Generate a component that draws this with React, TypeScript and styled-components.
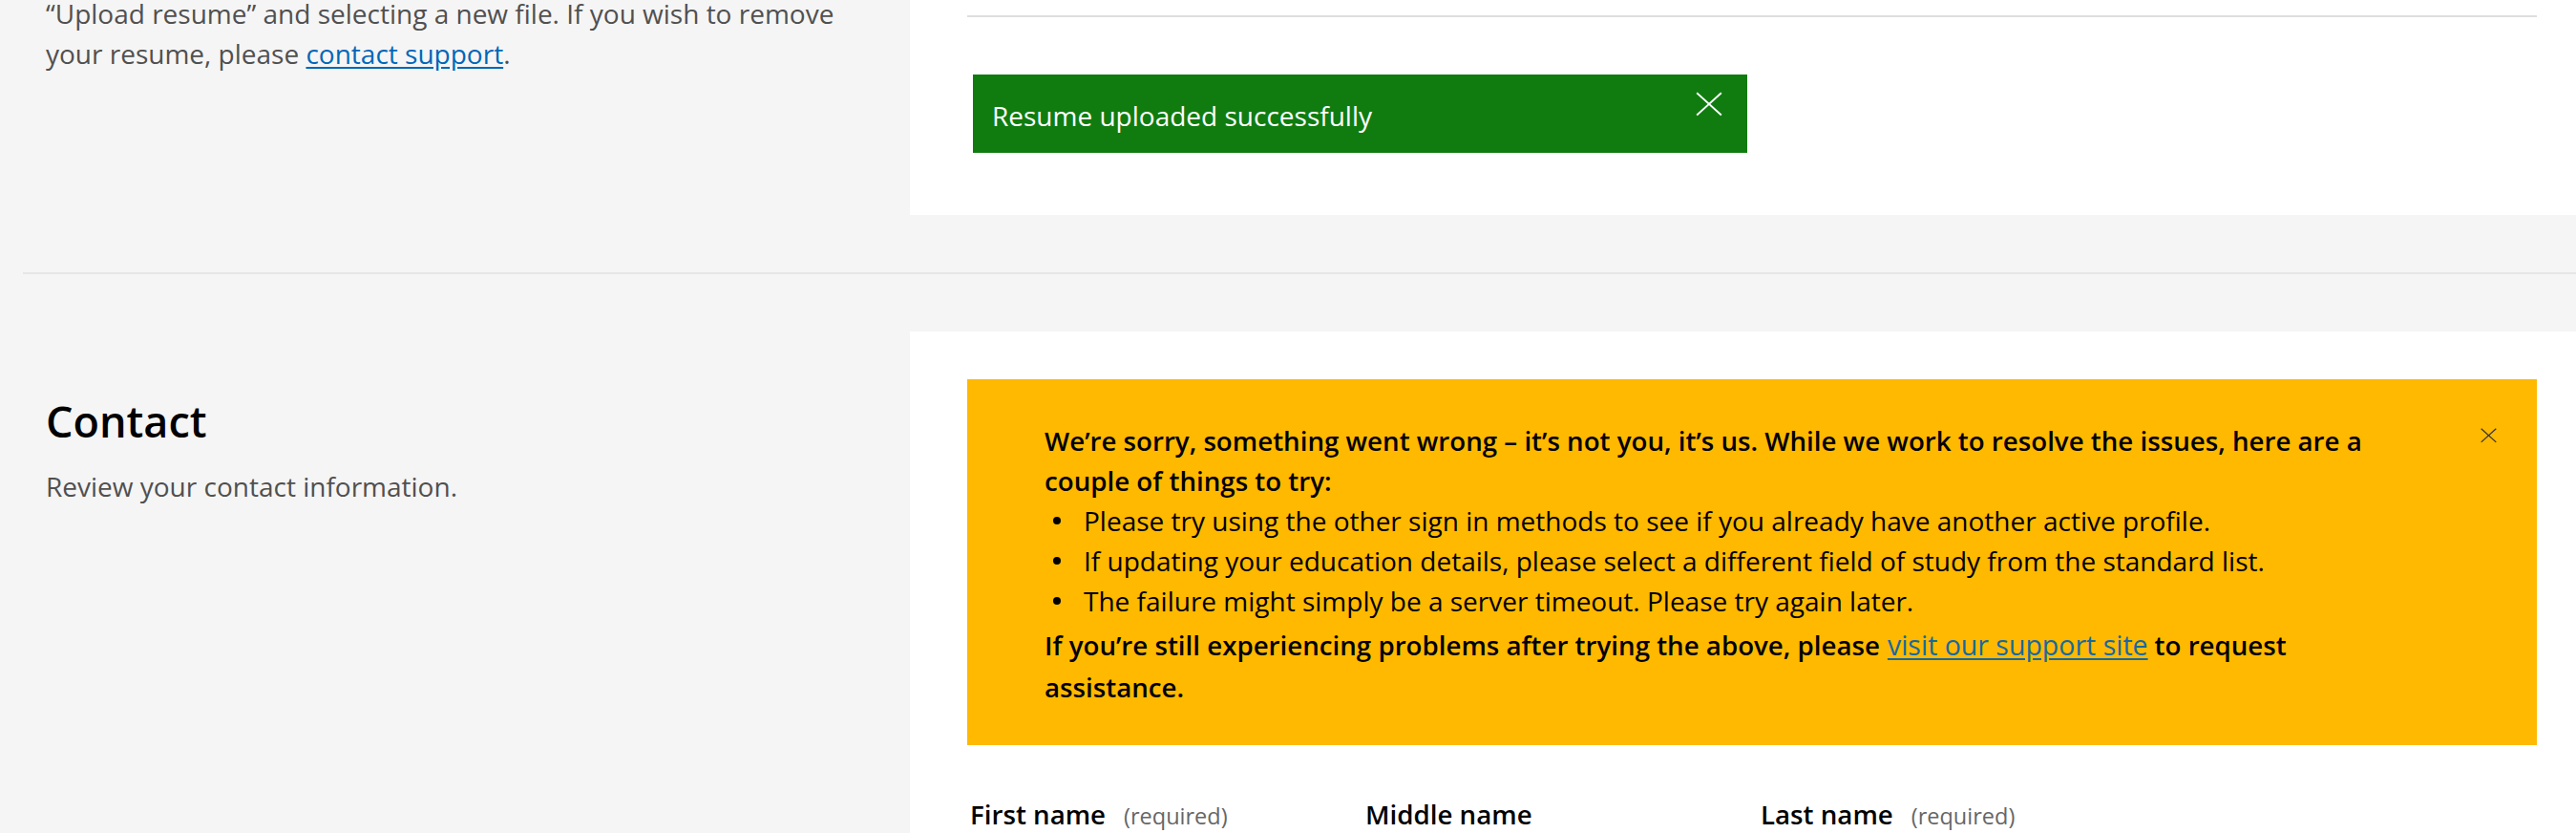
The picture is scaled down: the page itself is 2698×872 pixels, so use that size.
import styled, { createGlobalStyle } from 'styled-components';

const GlobalStyle = createGlobalStyle`
  html, body {
    margin: 0;
    padding: 0;
    background: #f5f5f5;
  }
  body {
    font-family: "Open Sans", "Noto Sans", sans-serif;
    color: #000;
    overflow: hidden;
  }
`;

const Page = styled.div`
  padding-left: 24px;
  margin-top: -7px;
`;

const Section = styled.section`
  display: grid;
  grid-template-columns: 929px 1fr;
  align-items: start;
`;

const Intro = styled.div`
  padding: 0 50px 0 24px;
`;

const Heading = styled.h2`
  margin: 66px 0 0;
  font-size: 45px;
  line-height: 55px;
  font-weight: 600;
  color: #000;
`;

const Description = styled.p<{ $gap?: number }>`
  margin: ${p => p.$gap ?? 0}px 0 0;
  font-size: 28px;
  line-height: 42px;
  color: #505050;

  a {
    color: #0067b8;
    text-decoration: underline;
    text-underline-offset: 3px;
  }
`;

const Card = styled.div<{ $padTop: number; $padBottom: number }>`
  background: #fff;
  padding: ${p => p.$padTop}px 41px ${p => p.$padBottom}px 60px;
`;

const Rule = styled.div`
  height: 2px;
  background: #dedede;
`;

const Toast = styled.div`
  position: relative;
  box-sizing: border-box;
  width: 811px;
  height: 82px;
  margin: 60px 0 0 6px;
  padding: 4px 20px 0;
  display: flex;
  align-items: center;
  background: #107c10;
  color: #fff;
  font-size: 28px;
`;

const CloseButton = styled.button<{ $top: number; $right: number }>`
  position: absolute;
  top: ${p => p.$top}px;
  right: ${p => p.$right}px;
  padding: 0;
  border: 0;
  background: none;
  line-height: 0;
  cursor: pointer;
`;

const Divider = styled.hr`
  margin: 60px 0;
  border: 0;
  height: 2px;
  background: #e6e6e6;
`;

const Alert = styled.div`
  position: relative;
  background: #ffb900;
  padding: 43px 148px 39px 81px;
  font-size: 28px;
  line-height: 42px;
  color: #000;
`;

const AlertText = styled.p<{ $gap?: number; $lh?: number }>`
  margin: ${p => p.$gap ?? 0}px 0 0;
  font-size: 27.7px;
  font-weight: 600;
  line-height: ${p => p.$lh ?? 42}px;
`;

const AlertLink = styled.a`
  margin: 0 7px 0 8px;
  font-size: 28.5px;
  font-weight: 400;
  color: #17699f;
  text-decoration: underline;
  text-underline-offset: 3px;
`;

const Tips = styled.ul`
  margin: 0;
  padding: 0;
  list-style: none;
`;

const Tip = styled.li`
  position: relative;
  padding-left: 41px;

  &::before {
    content: '';
    position: absolute;
    left: 9px;
    top: 17px;
    width: 8px;
    height: 8px;
    border-radius: 50%;
    background: #000;
  }
`;

const FormRow = styled.div`
  display: grid;
  grid-template-columns: repeat(3, 414px);
  margin-top: 51px;
  padding-left: 3px;
`;

const Label = styled.label`
  font-size: 27.7px;
  line-height: 42px;
  font-weight: 600;
  color: #000;
`;

const Required = styled.span`
  margin-left: 19px;
  font-size: 23.5px;
  font-weight: 400;
  color: #666;
`;

const Cross = ({ size, stroke, color }: { size: number; stroke: number; color: string }) => (
  <svg width={size} height={size * 0.92} viewBox="0 0 24 22" fill="none">
    <path d="M1 1 L23 21 M23 1 L1 21" stroke={color} strokeWidth={stroke} />
  </svg>
);

const tips = [
  'Please try using the other sign in methods to see if you already have another active profile.',
  'If updating your education details, please select a different field of study from the standard list.',
  'The failure might simply be a server timeout. Please try again later.',
];

const App = () => (
  <>
    <GlobalStyle />
    <Page>
      <Section>
        <Intro>
          <Description>
            “Upload resume” and selecting a new file. If you wish to remove your resume, please{' '}
            <a href="#">contact support</a>.
          </Description>
        </Intro>
        <Card $padTop={23} $padBottom={65}>
          <Rule />
          <Toast role="status">
            Resume uploaded successfully
            <CloseButton $top={18} $right={26} aria-label="Close">
              <Cross size={28} stroke={1.6} color="#fff" />
            </CloseButton>
          </Toast>
        </Card>
      </Section>

      <Divider />

      <Section>
        <Intro>
          <Heading>Contact</Heading>
          <Description $gap={20}>Review your contact information.</Description>
        </Intro>
        <Card $padTop={50} $padBottom={60}>
          <Alert role="alert">
            <AlertText>
              We’re sorry, something went wrong – it’s not you, it’s us. While we work to resolve the issues, here are a couple of things to try:
            </AlertText>
            <Tips>
              {tips.map(t => (
                <Tip key={t}>{t}</Tip>
              ))}
            </Tips>
            <AlertText $gap={3} $lh={44}>
              If you’re still experiencing problems after trying the above, please
              <AlertLink href="#">visit our support site</AlertLink>
              to request assistance.
            </AlertText>
            <CloseButton $top={51} $right={42} aria-label="Dismiss">
              <Cross size={17} stroke={1.8} color="#333" />
            </CloseButton>
          </Alert>
          <FormRow>
            <Label>
              First name<Required>(required)</Required>
            </Label>
            <Label>Middle name</Label>
            <Label>
              Last name<Required>(required)</Required>
            </Label>
          </FormRow>
        </Card>
      </Section>
    </Page>
  </>
);

export default App;
